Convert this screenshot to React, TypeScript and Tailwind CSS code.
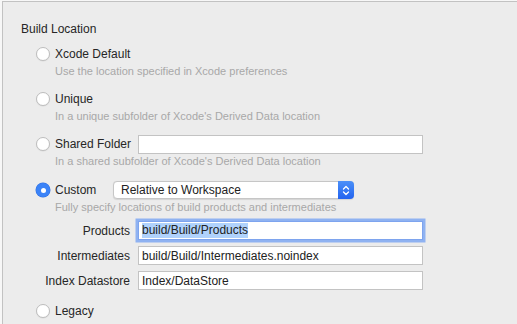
import React from 'react'

function Radio({ checked }: { checked?: boolean }) {
  if (checked) {
    return (
      <span className="flex h-[14px] w-[14px] shrink-0 items-center justify-center rounded-full bg-[#3b83f7] shadow-[0_0_0_0.5px_#2f6fe0]">
        <span className="h-[5px] w-[5px] rounded-full bg-white" />
      </span>
    )
  }
  return <span className="h-[14px] w-[14px] shrink-0 rounded-full border border-[#bdbdbd] bg-white shadow-[0_0.5px_1px_rgba(0,0,0,0.08)]" />
}

function Field({ value, focused, selected }: { value?: string; focused?: boolean; selected?: boolean }) {
  return (
    <div
      className={
        'flex h-[19px] w-[285px] items-center border bg-white px-[3px] text-[12px] text-[#222] ' +
        (focused ? 'border-[#7ea4ee] shadow-[0_0_0_2.5px_#8fb2f1]' : 'border-[#c3c3c3]')
      }
    >
      {selected ? <span className="bg-[#b0d2fc] leading-[15px]">{value}</span> : value}
    </div>
  )
}

function Desc({ children }: { children: React.ReactNode }) {
  return <div className="h-[14px] pl-[19px] text-[11px] leading-[14px] text-[#a8a8a8]">{children}</div>
}

export default function App() {
  const paths = [
    { label: 'Products', value: 'build/Build/Products', focused: true },
    { label: 'Intermediates', value: 'build/Build/Intermediates.noindex' },
    { label: 'Index Datastore', value: 'Index/DataStore' },
  ]

  return (
    <div className="h-[324px] w-[517px] overflow-hidden bg-[#f7f7f7] pl-[2px] pt-[1px] font-['Liberation_Sans',Arial,sans-serif]">
      <div className="h-full border-l border-t border-[#c2c2c2] bg-[#ececec] pl-[18px] pt-[19px] text-[12px] text-[#262626]">
        <div className="h-[16px] leading-[16px]">Build Location</div>

        <div className="ml-[15px] mt-[7px]">
          {/* Xcode Default */}
          <div className="flex h-[20px] items-center gap-[5px]">
            <Radio />
            <span>Xcode Default</span>
          </div>
          <Desc>Use the location specified in Xcode preferences</Desc>

          {/* Unique */}
          <div className="mt-[11px] flex h-[20px] items-center gap-[5px]">
            <Radio />
            <span>Unique</span>
          </div>
          <Desc>In a unique subfolder of Xcode's Derived Data location</Desc>

          {/* Shared Folder */}
          <div className="mt-[11px] flex h-[20px] items-center gap-[5px]">
            <Radio />
            <span className="w-[78px]">Shared Folder</span>
            <Field />
          </div>
          <Desc>In a shared subfolder of Xcode's Derived Data location</Desc>

          {/* Custom */}
          <div className="mt-[12px] flex h-[20px] items-center gap-[5px]">
            <Radio checked />
            <span className="w-[53px]">Custom</span>
            <div className="flex h-[18px] w-[241px] items-stretch rounded-[4px] border border-[#c6c6c6] bg-white shadow-[0_0.5px_1px_rgba(0,0,0,0.1)]">
              <span className="flex-1 pl-[7px] text-[12px] leading-[16px] text-[#222]">Relative to Workspace</span>
              <span className="-my-px -mr-px flex w-[16px] items-center justify-center rounded-r-[4px] bg-gradient-to-b from-[#4b8ff8] to-[#2463ef]">
                <svg width="8" height="11" viewBox="0 0 8 11" fill="none" stroke="white" strokeWidth="1.3" strokeLinecap="round" strokeLinejoin="round">
                  <polyline points="1.5,4 4,1.5 6.5,4" />
                  <polyline points="1.5,7 4,9.5 6.5,7" />
                </svg>
              </span>
            </div>
          </div>
          <Desc>Fully specify locations of build products and intermediates</Desc>
        </div>

        {/* Custom paths */}
        <div className="mt-[7px] flex flex-col gap-[6px]">
          {paths.map(p => (
            <div key={p.label} className="flex h-[19px] items-center gap-[8px]">
              <span className="w-[109px] text-right">{p.label}</span>
              <Field value={p.value} focused={p.focused} selected={p.focused} />
            </div>
          ))}
        </div>

        {/* Legacy */}
        <div className="ml-[15px] mt-[11px]">
          <div className="flex h-[20px] items-center gap-[5px]">
            <Radio />
            <span>Legacy</span>
          </div>
          <Desc>Use target settings to place build products relative to the project directory</Desc>
        </div>
      </div>
    </div>
  )
}
